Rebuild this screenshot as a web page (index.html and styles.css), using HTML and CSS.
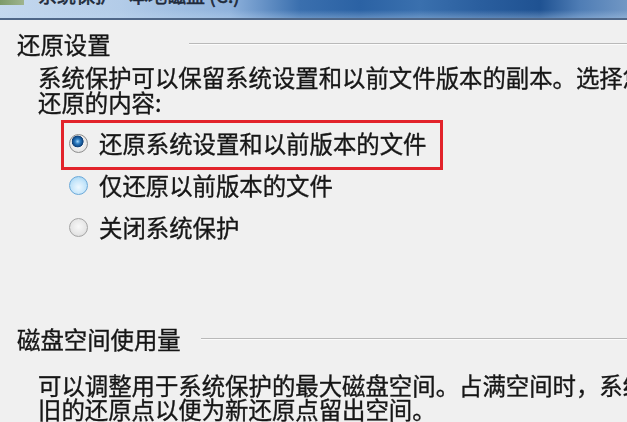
FILE: index.html
```html
<!DOCTYPE html>
<html lang="zh-CN">
<head>
  <meta charset="UTF-8"/>
  <title>系统保护</title>
  <meta name="viewport" content="width=device-width,initial-scale=1"/>
  <link rel="stylesheet" href="styles.css">
</head>
<body>
  <div class="window">
    <div class="titlebar">
      <span class="app-icon"></span>
      <span class="title">系统保护 - 本地磁盘 (C:)</span>
    </div>

    <div class="content">
      <div class="group-head">
        <span>还原设置</span>
        <span class="rule rule-wide"></span>
      </div>
      <p class="desc"><span class="line">系统保护可以保留系统设置和以前文件版本的副本。选择您希望能够</span><br>还原的内容:</p>

      <ul class="options">
        <li class="option marked"><span class="radio checked"></span>还原系统设置和以前版本的文件</li>
        <li class="option"><span class="radio hot"></span>仅还原以前版本的文件</li>
        <li class="option"><span class="radio"></span>关闭系统保护</li>
      </ul>

      <div class="group-head disk">
        <span>磁盘空间使用量</span>
        <span class="rule"></span>
      </div>
      <p class="desc desc-disk"><span class="line">可以调整用于系统保护的最大磁盘空间。占满空间时，系统将删除较</span><br>旧的还原点以便为新还原点留出空间。</p>
    </div>
  </div>
</body>
</html>
```

FILE: styles.css
```css
html,body{margin:0;padding:0;}
body{background:#f0f0f0;width:627px;height:422px;overflow:hidden;font-family:"Noto Sans CJK SC","Noto Sans",sans-serif;color:#161616;}
.window{filter:blur(.45px);}

/* title bar, only its lower strip is in view */
.titlebar{height:18px;border-bottom:2px solid #4f6788;overflow:hidden;display:flex;align-items:flex-start;
  background:
    linear-gradient(to bottom,rgba(255,255,255,0) 55%,rgba(190,215,240,.35) 100%),
    linear-gradient(to right,#c4d8ee 0,#b3cce8 120px,#8fb2dc 230px,#3a6fae 300px,#2b62a4 360px,#3a70ae 420px,#2a5e9e 480px,#1f5292 540px,#4f7db5 580px,#7197c4 627px);}
.app-icon{width:24px;height:5px;flex:none;background:linear-gradient(to right,#7c9a6a,#9fb48e);}
.title{margin:-15px 0 0 14px;font-size:19px;line-height:19px;color:#1f2a3a;white-space:nowrap;-webkit-text-stroke:.6px #1f2a3a;}

.content{padding:11px 0 0 17px;font-size:23.4px;-webkit-text-stroke:.35px #161616;}
.group-head{display:flex;align-items:center;line-height:26px;}
.rule{flex:1;height:0;border-top:1px solid #b9b9b9;border-bottom:1px solid #fbfbfb;margin-left:20px;}
.rule-wide{margin-left:78px;}

.desc{margin:8px 0 0 21px;line-height:25px;}
.desc .line{white-space:nowrap;}

.options{list-style:none;margin:7px 0 0 52px;padding:0;}
.option{display:flex;align-items:center;width:max-content;height:42px;}
.option.marked{position:relative;}
.option.marked::after{content:"";position:absolute;left:-8px;right:-17px;top:-2px;bottom:-6px;border:3px solid #e2232b;}

.radio{width:17px;height:17px;border-radius:50%;margin-right:11px;flex:none;border:1px solid #a4a4a4;
  background:radial-gradient(circle at 50% 45%,#f8f8f8 0,#e6e6e6 60%,#cfcfcf 100%);}
.radio.checked{border-color:#8d8d8d;
  background:
    radial-gradient(circle at 45% 38%,#a6d8fa 0,#2c7cc2 2.5px,#0d3f78 5.6px,rgba(13,63,120,0) 6.2px),
    radial-gradient(circle,#fdfdfd 0,#e6e6e6 70%,#c6c6c6 100%);}
.radio.hot{border-color:#6aa8d8;
  background:radial-gradient(circle at 50% 60%,#eef8ff 0,#c4e5fa 55%,#93cbef 100%);}

.group-head.disk{margin-top:78px;}
.desc-disk{margin-top:21px;line-height:24px;}
```
